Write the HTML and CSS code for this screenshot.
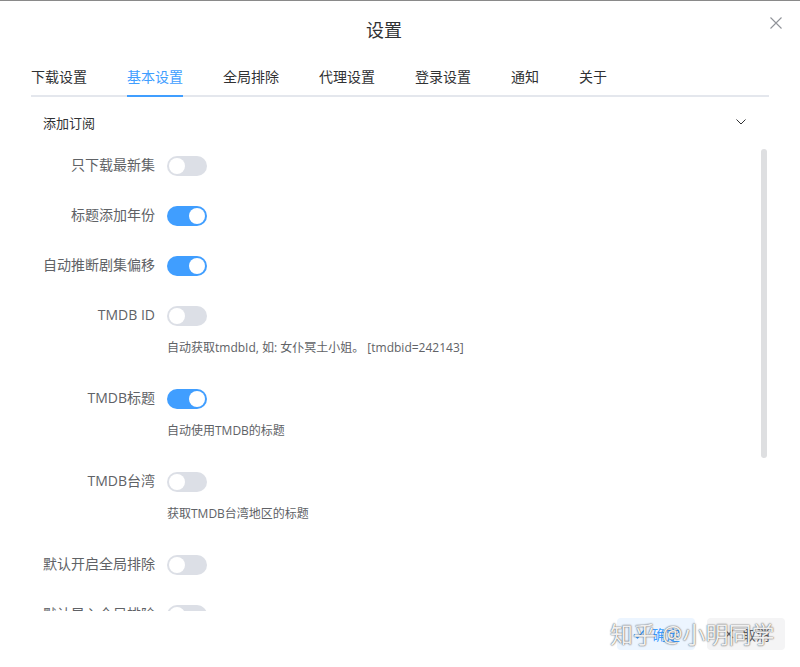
FILE: index.html
```html
<!DOCTYPE html>
<html lang="zh-CN">
<head>
  <meta charset="UTF-8">
  <title>设置</title>
  <link rel="stylesheet" href="styles.css">
</head>
<body>

<div class="dialog">
  <div class="dialog-header">
    <span class="dialog-title">设置</span>
    <button class="dialog-close" aria-label="关闭">
      <svg width="12" height="12" viewBox="0 0 12 12"><path d="M0.5 0.5L11.5 11.5M11.5 0.5L0.5 11.5" stroke="#909399" stroke-width="1.1" fill="none"/></svg>
    </button>
  </div>

  <div class="dialog-body">
    <div class="tabs">
      <div class="tab">下载设置</div>
      <div class="tab active">基本设置</div>
      <div class="tab">全局排除</div>
      <div class="tab">代理设置</div>
      <div class="tab">登录设置</div>
      <div class="tab">通知</div>
      <div class="tab">关于</div>
    </div>

    <div class="collapse">
      <div class="collapse-header">
        <span>添加订阅</span>
        <svg width="10" height="6" viewBox="0 0 10 6"><path d="M0.5 0.5L5 5L9.5 0.5" stroke="#303133" stroke-width="1" fill="none"/></svg>
      </div>
      <div class="collapse-wrap">
        <div class="form">
          <div class="form-item">
            <label>只下载最新集</label>
            <div class="form-content"><span class="switch"></span></div>
          </div>
          <div class="form-item">
            <label>标题添加年份</label>
            <div class="form-content"><span class="switch on"></span></div>
          </div>
          <div class="form-item">
            <label>自动推断剧集偏移</label>
            <div class="form-content"><span class="switch on"></span></div>
          </div>
          <div class="form-item">
            <label>TMDB ID</label>
            <div class="form-content">
              <span class="switch"></span>
              <div class="desc">自动获取tmdbId, 如: 女仆冥土小姐。 [tmdbid=242143]</div>
            </div>
          </div>
          <div class="form-item">
            <label>TMDB标题</label>
            <div class="form-content">
              <span class="switch on"></span>
              <div class="desc">自动使用TMDB的标题</div>
            </div>
          </div>
          <div class="form-item">
            <label>TMDB台湾</label>
            <div class="form-content">
              <span class="switch"></span>
              <div class="desc">获取TMDB台湾地区的标题</div>
            </div>
          </div>
          <div class="form-item">
            <label>默认开启全局排除</label>
            <div class="form-content"><span class="switch"></span></div>
          </div>
          <div class="form-item">
            <label>默认导入全局排除</label>
            <div class="form-content"><span class="switch"></span></div>
          </div>
        </div>
        <div class="scroll-thumb"></div>
      </div>
    </div>
  </div>

  <div class="dialog-footer">
    <button class="btn btn-primary">
      <svg width="14" height="14" viewBox="0 0 14 14"><path d="M2 7.5L5.5 11L12 3.5" stroke="#409eff" stroke-width="1.4" fill="none"/></svg>
      确定
    </button>
    <button class="btn">
      <svg width="14" height="14" viewBox="0 0 14 14"><path d="M3 3L11 11M11 3L3 11" stroke="#606266" stroke-width="1.3" fill="none"/></svg>
      取消
    </button>
  </div>

  <div class="watermark">知乎 @小明同学</div>
</div>

</body>
</html>
```

FILE: styles.css
```css
body {
  margin: 0;
  padding: 0;
  background: #fff;
  font-family: "Open Sans", "Noto Sans CJK SC", sans-serif;
  color: #606266;
}
.dialog {
  position: relative;
  height: 667px;
  box-sizing: border-box;
  border-top: 1px solid #8a8a8a;
  background: #fff;
  overflow: hidden;
}
.dialog-header {
  position: relative;
  height: 56px;
  box-sizing: border-box;
  padding: 17px 32px 0 0;
  text-align: center;
}
.dialog-title {
  font-size: 18px;
  line-height: 24px;
  color: #303133;
}
.dialog-close {
  position: absolute;
  top: 16px;
  right: 18px;
  padding: 0;
  border: none;
  background: none;
  line-height: 0;
  cursor: pointer;
}
.dialog-body {
  padding: 0 31px;
}
.tabs {
  position: relative;
  display: flex;
  height: 40px;
}
.tabs::after {
  content: "";
  position: absolute;
  left: 0;
  right: 0;
  bottom: 0;
  height: 2px;
  background: #e4e7ed;
}
.tab {
  position: relative;
  padding: 0 20px;
  font-size: 14px;
  line-height: 40px;
  color: #303133;
}
.tab:first-child {
  padding-left: 0;
}
.tab.active {
  color: #409eff;
}
.tab.active::after {
  content: "";
  position: absolute;
  left: 20px;
  right: 20px;
  bottom: 0;
  height: 2px;
  background: #409eff;
  z-index: 1;
}
.collapse {
  margin-top: 1px;
}
.collapse-header {
  display: flex;
  justify-content: space-between;
  align-items: center;
  height: 48px;
  padding: 0 23px 0 12px;
  border-bottom: 3px solid transparent;
  font-size: 13px;
  color: #303133;
}
.collapse-wrap {
  position: relative;
  height: 462px;
  overflow: hidden;
}
.form {
  padding-left: 12px;
}
.form-item {
  display: flex;
  margin-bottom: 18px;
}
.form-item label {
  width: 124px;
  flex-shrink: 0;
  box-sizing: border-box;
  padding-right: 12px;
  text-align: right;
  font-size: 14px;
  line-height: 32px;
  color: #606266;
}
.form-content {
  line-height: 32px;
}
.switch {
  position: relative;
  display: inline-block;
  vertical-align: middle;
  width: 40px;
  height: 20px;
  margin-top: -2px;
  border-radius: 10px;
  background: #dcdfe6;
}
.switch::after {
  content: "";
  position: absolute;
  top: 2px;
  left: 2px;
  width: 16px;
  height: 16px;
  border-radius: 50%;
  background: #fff;
}
.switch.on {
  background: #409eff;
}
.switch.on::after {
  left: 22px;
}
.desc {
  font-size: 12px;
  line-height: 33px;
  color: #606266;
}
.scroll-thumb {
  position: absolute;
  top: 0;
  right: 2px;
  width: 6px;
  height: 309px;
  border-radius: 3px;
  background: #dedfe1;
}
.dialog-footer {
  display: flex;
  justify-content: flex-end;
  gap: 12px;
  padding: 7px 15px 0;
}
.btn {
  display: inline-flex;
  align-items: center;
  gap: 6px;
  height: 32px;
  padding: 0 15px;
  border: none;
  border-radius: 4px;
  background: #f4f4f5;
  color: #606266;
  font-family: inherit;
  font-size: 14px;
  cursor: pointer;
}
.btn-primary {
  background: #ecf5ff;
  color: #409eff;
}
.watermark {
  position: absolute;
  left: 610px;
  top: 618px;
  font-size: 23px;
  line-height: 30px;
  color: rgba(255, 255, 255, 0.92);
  text-shadow: 0 0 1px #555, 0 0 2px rgba(0, 0, 0, 0.45);
  white-space: nowrap;
  pointer-events: none;
}
```
